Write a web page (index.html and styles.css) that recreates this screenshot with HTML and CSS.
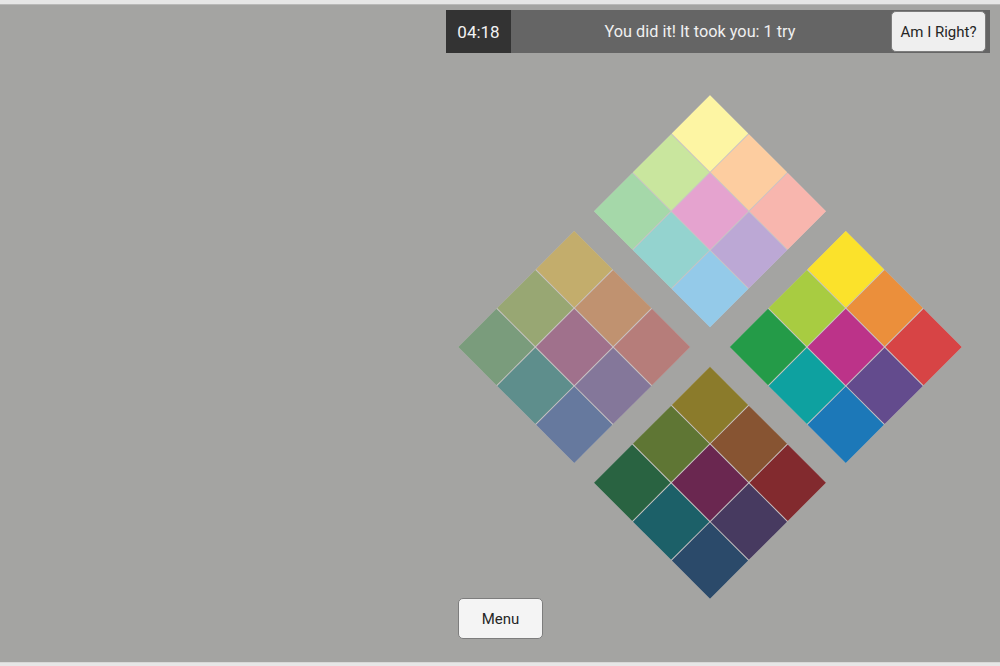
FILE: index.html
```html
<!DOCTYPE html>
<html lang="en">
<head>
<meta charset="utf-8">
<title>Color Puzzle</title>
<link rel="stylesheet" href="styles.css">
</head>
<body>
<div class="page">
  <div class="strip strip-top"></div>
  <main class="stage">
    <header class="topbar">
      <div class="timer">04:18</div>
      <div class="message">You did it! It took you: 1 try</div>
      <button class="btn btn-check" type="button">Am I Right?</button>
    </header>

    <div class="board">
      <div class="block">
        <div class="tile" style="background:#fdf5a3"></div>
        <div class="tile" style="background:#fdcda0"></div>
        <div class="tile" style="background:#f8b6ae"></div>
        <div class="tile" style="background:#c9e69e"></div>
        <div class="tile" style="background:#e5a3cf"></div>
        <div class="tile" style="background:#bca8d5"></div>
        <div class="tile" style="background:#a5d8a9"></div>
        <div class="tile" style="background:#94d3cf"></div>
        <div class="tile" style="background:#94cae9"></div>
      </div>
      <div class="block">
        <div class="tile" style="background:#fbe22b"></div>
        <div class="tile" style="background:#eb8f3b"></div>
        <div class="tile" style="background:#d74445"></div>
        <div class="tile" style="background:#a8cc41"></div>
        <div class="tile" style="background:#bc3389"></div>
        <div class="tile" style="background:#634b8d"></div>
        <div class="tile" style="background:#249b48"></div>
        <div class="tile" style="background:#0ea1a0"></div>
        <div class="tile" style="background:#1c78b8"></div>
      </div>
      <div class="block">
        <div class="tile" style="background:#c3ad6c"></div>
        <div class="tile" style="background:#c09270"></div>
        <div class="tile" style="background:#b67d7a"></div>
        <div class="tile" style="background:#98a773"></div>
        <div class="tile" style="background:#a0718c"></div>
        <div class="tile" style="background:#84779a"></div>
        <div class="tile" style="background:#7a9c7c"></div>
        <div class="tile" style="background:#5e8e8c"></div>
        <div class="tile" style="background:#66799e"></div>
      </div>
      <div class="block">
        <div class="tile" style="background:#8b7b2b"></div>
        <div class="tile" style="background:#875432"></div>
        <div class="tile" style="background:#822a2e"></div>
        <div class="tile" style="background:#5f7634"></div>
        <div class="tile" style="background:#6a2750"></div>
        <div class="tile" style="background:#473a60"></div>
        <div class="tile" style="background:#296341"></div>
        <div class="tile" style="background:#1c6068"></div>
        <div class="tile" style="background:#2b4a6a"></div>
      </div>
    </div>

    <button class="btn btn-menu" type="button">Menu</button>
  </main>
  <div class="strip strip-bottom"></div>
</div>
</body>
</html>
```

FILE: styles.css
```css
html, body {
  margin: 0;
  padding: 0;
}

body {
  width: 1000px;
  height: 666px;
  overflow: hidden;
  background: #a4a4a2;
  font-family: Roboto, "Liberation Sans", Arial, sans-serif;
}

.page {
  display: flex;
  flex-direction: column;
  height: 666px;
}

.strip {
  flex: none;
  background: #e6e6e6;
}

.strip-top {
  height: 4px;
  border-bottom: 1px solid #b9b9b8;
}

.strip-bottom {
  height: 3px;
  border-top: 1px solid #d8d8d7;
}

.stage {
  flex: 1;
  display: flex;
  flex-direction: column;
  align-items: flex-start;
  padding-top: 5px;
  background: #a4a4a2;
}

.topbar {
  margin-left: 446px;
  width: 544px;
  height: 43px;
  display: flex;
  align-items: center;
  background: #656565;
}

.timer {
  flex: none;
  width: 65px;
  height: 43px;
  background: #333333;
  color: #f2f2f2;
  font-size: 17px;
  display: flex;
  align-items: center;
  justify-content: center;
}

.message {
  flex: 1;
  text-align: center;
  color: #f0f0f0;
  font-size: 16.3px;
  padding-right: 2px;
}

.btn {
  font-family: Roboto, "Liberation Sans", Arial, sans-serif;
  background: #efefef;
  border: 1px solid #7d7d7d;
  border-radius: 5px;
  color: #262626;
  padding: 0;
  cursor: pointer;
}

.btn-check {
  flex: none;
  width: 95px;
  height: 41px;
  margin-right: 4px;
  font-size: 15px;
}

.board {
  margin-top: 116px;
  margin-left: 532px;
  width: 356px;
  height: 356px;
  display: grid;
  grid-template-columns: 164px 164px;
  grid-template-rows: 164px 164px;
  gap: 28px;
  transform: rotate(45deg);
}

.block {
  display: grid;
  grid-template-columns: repeat(3, 1fr);
  grid-template-rows: repeat(3, 1fr);
  gap: 1px;
  background: rgba(205, 200, 200, 0.9);
}

.btn-menu {
  margin-top: 73px;
  margin-left: 458px;
  width: 85px;
  height: 41px;
  font-size: 15px;
  background: #f4f4f4;
}
```
